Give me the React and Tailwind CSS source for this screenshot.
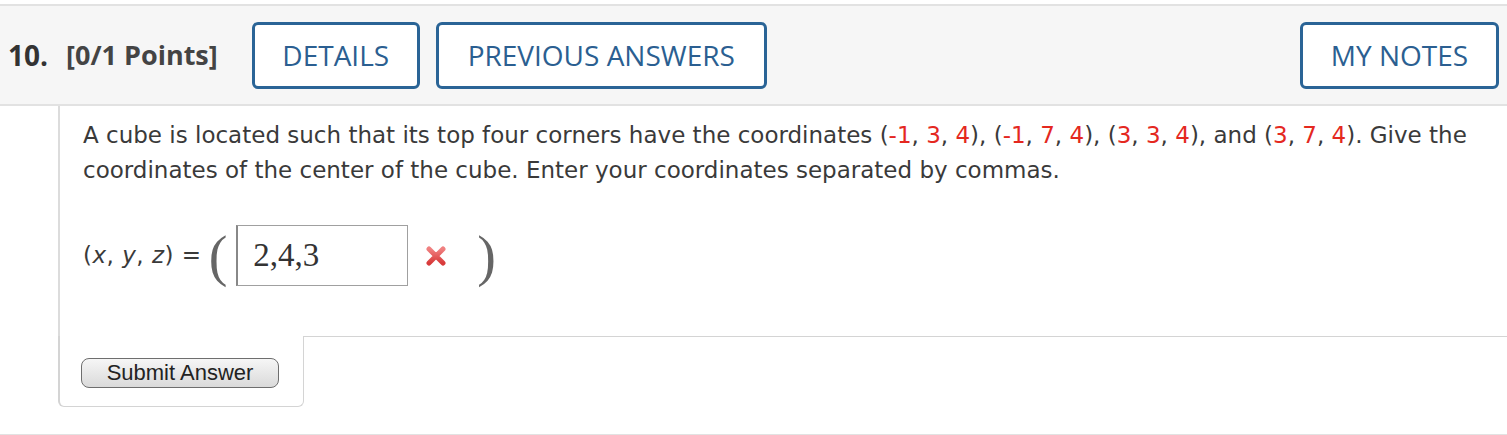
import React from 'react';

const Red = ({ children }) => <span className="text-[#e4281f]">{children}</span>;

function HeaderButton({ children, className = '' }) {
	return (
		<button
			type="button"
			className={`h-[67px] rounded-[6px] border-[3px] border-[#2a6496] bg-white text-[28px] text-[#2b5f91] ${className}`}
		>
			{children}
		</button>
	);
}

export default function App() {
	return (
		<div className="w-[1507px] h-[435px] bg-white overflow-hidden">
			<div className="h-[4px]" />
			<div
				className="flex items-center h-[102px] bg-[#f6f6f6] border-t-2 border-b-2 border-[#e2e2e2] pl-[8px] pr-[8px]"
				style={{ fontFamily: '"Open Sans", sans-serif' }}
			>
				<span className="text-[28px] font-bold text-[#333]">10.</span>
				<span className="ml-[18px] text-[27px] font-bold text-[#444]">[0/1 Points]</span>
				<HeaderButton className="ml-[34px] w-[168px]">DETAILS</HeaderButton>
				<HeaderButton className="ml-[16px] w-[331px]">PREVIOUS ANSWERS</HeaderButton>
				<HeaderButton className="ml-auto w-[199px]">MY NOTES</HeaderButton>
			</div>

			<div className="ml-[58px]" style={{ fontFamily: 'Verdana, "DejaVu Sans", sans-serif' }}>
				<div className="border-l-2 border-[#dcdcdc] pl-[23px] pt-[12px] pb-[50px] text-[#3a3a3a]">
					<p className="text-[23px] leading-[35px] pr-[20px]">
						A cube is located such that its top four corners have the coordinates (<Red>-1</Red>, <Red>3</Red>, <Red>4</Red>), (<Red>-1</Red>, <Red>7</Red>, <Red>4</Red>), (<Red>3</Red>, <Red>3</Red>, <Red>4</Red>), and (<Red>3</Red>, <Red>7</Red>, <Red>4</Red>). Give the coordinates of the center of the cube. Enter your coordinates separated by commas.
					</p>
					<div className="flex items-center mt-[37px] h-[61px] text-[23px]">
						<span className="tracking-[0.5px]">
							(<i>x</i>, <i>y</i>, <i>z</i>) =
						</span>
						<span
							className="ml-[7px] text-[56px] leading-none text-[#666] font-light"
							style={{ fontFamily: '"Liberation Serif", serif' }}
						>
							(
						</span>
						<div
							className="ml-[9px] w-[172px] h-[61px] border border-[#a0a0a0] border-l-[2px] border-l-[#888] flex items-center pl-[15px] text-[33px] text-[#333]"
							style={{ fontFamily: '"Liberation Serif", serif' }}
						>
							2,4,3
						</div>
						<svg className="ml-[17px]" width="22" height="20" viewBox="0 0 22 20">
							<defs>
								<linearGradient id="xg" x1="0" y1="0" x2="0" y2="1">
									<stop offset="0" stopColor="#f08080" />
									<stop offset="1" stopColor="#d83a3a" />
								</linearGradient>
							</defs>
							<path d="M4 3 L18 17 M18 3 L4 17" stroke="url(#xg)" strokeWidth="5" strokeLinecap="round" />
						</svg>
						<span
							className="ml-[30px] text-[56px] leading-none text-[#666] font-light"
							style={{ fontFamily: '"Liberation Serif", serif' }}
						>
							)
						</span>
					</div>
				</div>
				<div className="flex">
					<div className="w-[246px] h-[71px] border-l-2 border-r border-b border-[#d4d4d4] rounded-b-[6px] flex items-start pl-[21px] pt-[22px]">
						<button
							type="button"
							className="w-[198px] h-[30px] rounded-[8px] border border-[#6e6e6e] bg-gradient-to-b from-[#f6f6f6] to-[#dadada] text-[22px] text-[#222] leading-none"
							style={{ fontFamily: '"Liberation Sans", Arial, sans-serif' }}
						>
							Submit Answer
						</button>
					</div>
					<div className="flex-1 border-t border-[#d4d4d4]" />
				</div>
			</div>
			<div className="mt-[27px] h-[2px] bg-[#e2e2e2]" />
		</div>
	);
}
